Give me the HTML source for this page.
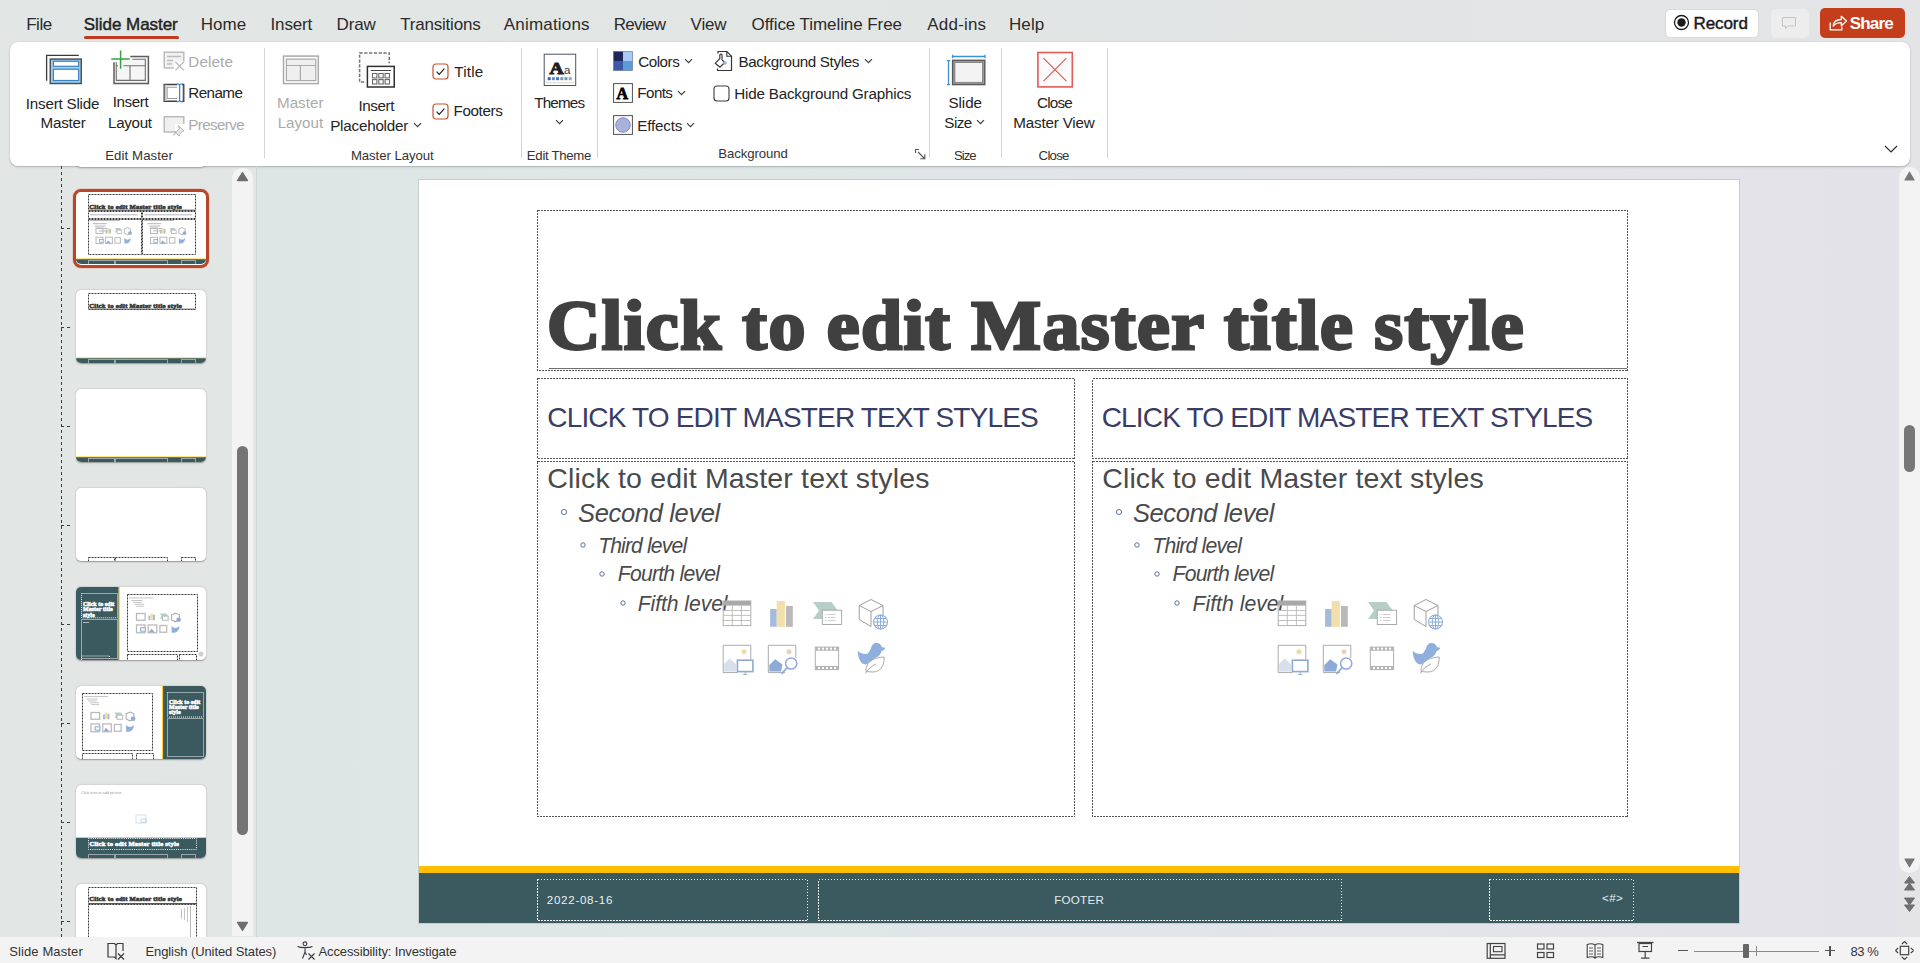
<!DOCTYPE html>
<html><head><meta charset="utf-8">
<style>
*{box-sizing:border-box}
html,body{margin:0;padding:0}
body{width:1920px;height:963px;overflow:hidden;position:relative;font-family:"Liberation Sans",sans-serif;color:#242424;background:#e3e6e5}
.a{position:absolute;white-space:nowrap}
svg{position:absolute;overflow:visible}
</style></head><body>
<div class="a" style="left:0px;top:0px;width:1920px;height:963px;background:linear-gradient(90deg,#e2e6e5 0%,#e1e5e4 50%,#e4e4e6 100%)"></div>
<div class="a" style="left:256px;top:166px;width:1643px;height:771px;background:linear-gradient(90deg,#dee6e5 0%,#dee7e6 20%,#e2e5e8 60%,#e4e2e9 100%)"></div>
<div class="a" style="left:26.18px;top:15.95px;font-family:'Liberation Sans',sans-serif;font-size:17px;line-height:17px;color:#2b2b2b;font-weight:normal;font-style:normal;letter-spacing:-0.15px;letter-spacing:-0.470px">File</div>
<div class="a" style="left:200.82px;top:15.95px;font-family:'Liberation Sans',sans-serif;font-size:17px;line-height:17px;color:#2b2b2b;font-weight:normal;font-style:normal;letter-spacing:-0.15px;letter-spacing:0.010px">Home</div>
<div class="a" style="left:270.50px;top:16.11px;font-family:'Liberation Sans',sans-serif;font-size:17px;line-height:17px;color:#2b2b2b;font-weight:normal;font-style:normal;letter-spacing:-0.15px">Insert</div>
<div class="a" style="left:336.50px;top:16.11px;font-family:'Liberation Sans',sans-serif;font-size:17px;line-height:17px;color:#2b2b2b;font-weight:normal;font-style:normal;letter-spacing:-0.15px">Draw</div>
<div class="a" style="left:400.14px;top:15.95px;font-family:'Liberation Sans',sans-serif;font-size:17px;line-height:17px;color:#2b2b2b;font-weight:normal;font-style:normal;letter-spacing:-0.15px;letter-spacing:-0.198px">Transitions</div>
<div class="a" style="left:503.82px;top:15.95px;font-family:'Liberation Sans',sans-serif;font-size:17px;line-height:17px;color:#2b2b2b;font-weight:normal;font-style:normal;letter-spacing:-0.15px;letter-spacing:0.188px">Animations</div>
<div class="a" style="left:613.66px;top:15.95px;font-family:'Liberation Sans',sans-serif;font-size:17px;line-height:17px;color:#2b2b2b;font-weight:normal;font-style:normal;letter-spacing:-0.15px;letter-spacing:-0.662px">Review</div>
<div class="a" style="left:690.50px;top:16.11px;font-family:'Liberation Sans',sans-serif;font-size:17px;line-height:17px;color:#2b2b2b;font-weight:normal;font-style:normal;letter-spacing:-0.15px">View</div>
<div class="a" style="left:751.50px;top:15.95px;font-family:'Liberation Sans',sans-serif;font-size:17px;line-height:17px;color:#2b2b2b;font-weight:normal;font-style:normal;letter-spacing:-0.15px;letter-spacing:-0.066px">Office Timeline Free</div>
<div class="a" style="left:927.30px;top:15.95px;font-family:'Liberation Sans',sans-serif;font-size:17px;line-height:17px;color:#2b2b2b;font-weight:normal;font-style:normal;letter-spacing:-0.15px;letter-spacing:0.197px">Add-ins</div>
<div class="a" style="left:1008.98px;top:15.95px;font-family:'Liberation Sans',sans-serif;font-size:17px;line-height:17px;color:#2b2b2b;font-weight:normal;font-style:normal;letter-spacing:-0.15px;letter-spacing:0.090px">Help</div>
<div class="a" style="left:83.82px;top:15.95px;font-family:'Liberation Sans',sans-serif;font-size:17px;line-height:17px;color:#242424;font-weight:normal;font-style:normal;letter-spacing:-0.5px;-webkit-text-stroke:0.45px #242424;letter-spacing:-0.049px">Slide Master</div>
<div class="a" style="left:84px;top:36px;width:95px;height:3px;border-radius:2px;background:#c23b21"></div>
<div class="a" style="left:1665px;top:9px;width:94px;height:29px;background:#fff;border:1px solid #d9d9d9;border-radius:5px"></div>
<svg style="left:1673px;top:14px" width="17" height="17" viewBox="0 0 17 17"><circle cx="8.5" cy="8.5" r="7" fill="none" stroke="#1b1b1b" stroke-width="1.3"/><circle cx="8.5" cy="8.5" r="4.2" fill="#1b1b1b"/></svg>
<div class="a" style="left:1693.52px;top:14.67px;font-family:'Liberation Sans',sans-serif;font-size:17px;line-height:17px;color:#1b1b1b;font-weight:normal;font-style:normal;letter-spacing:-0.6px;-webkit-text-stroke:0.45px #1b1b1b;letter-spacing:-0.088px">Record</div>
<div class="a" style="left:1771px;top:9px;width:38px;height:29px;background:#ededed;border-radius:5px"></div>
<svg style="left:1781px;top:16px" width="16" height="14" viewBox="0 0 16 14"><path d="M1.5 1.5h13v8.5h-7.5l-2.5 2.6v-2.6h-3z" fill="none" stroke="#c4c4c4" stroke-width="1"/></svg>
<div class="a" style="left:1820px;top:8px;width:85px;height:30px;background:#c43e1c;border-radius:5px"></div>
<svg style="left:1829px;top:14px" width="19" height="17" viewBox="0 0 19 17"><path d="M1.2 8.5v7.3h11.6v-3" fill="none" stroke="#fff" stroke-width="1.3"/><path d="M4.2 12.2c0.3-4.6 3.3-6.7 8.1-6.7v-3.2l5.2 4.7-5.2 4.7v-3.1c-3.6 0-6.3 1.1-8.1 3.6z" fill="none" stroke="#fff" stroke-width="1.3" stroke-linejoin="round"/></svg>
<div class="a" style="left:1849.84px;top:14.87px;font-family:'Liberation Sans',sans-serif;font-size:17px;line-height:17px;color:#fff;font-weight:bold;font-style:normal;letter-spacing:-0.5px;letter-spacing:-0.860px">Share</div>
<div class="a" style="left:10px;top:42px;width:1900px;height:124px;background:#fff;border-radius:8px;box-shadow:0 1px 2px rgba(0,0,0,0.22),0 0 1px rgba(0,0,0,0.2)"></div>
<div class="a" style="left:264px;top:48px;width:1px;height:110px;background:#d4d4d4"></div>
<div class="a" style="left:521px;top:48px;width:1px;height:110px;background:#d4d4d4"></div>
<div class="a" style="left:597px;top:48px;width:1px;height:110px;background:#d4d4d4"></div>
<div class="a" style="left:929px;top:48px;width:1px;height:110px;background:#d4d4d4"></div>
<div class="a" style="left:1001px;top:48px;width:1px;height:110px;background:#d4d4d4"></div>
<div class="a" style="left:1107px;top:48px;width:1px;height:110px;background:#d4d4d4"></div>
<div class="a" style="left:12.60px;width:100px;text-align:center;text-indent:-0.218px;top:95.73px;font-family:'Liberation Sans',sans-serif;font-size:15.2px;line-height:15.2px;color:#242424;font-weight:normal;font-style:normal;;letter-spacing:-0.218px">Insert Slide</div>
<div class="a" style="left:13.16px;width:100px;text-align:center;text-indent:-0.192px;top:115.41px;font-family:'Liberation Sans',sans-serif;font-size:15.2px;line-height:15.2px;color:#242424;font-weight:normal;font-style:normal;;letter-spacing:-0.192px">Master</div>
<div class="a" style="left:90.72px;width:80px;text-align:center;text-indent:-0.416px;top:94.13px;font-family:'Liberation Sans',sans-serif;font-size:15.2px;line-height:15.2px;color:#242424;font-weight:normal;font-style:normal;;letter-spacing:-0.416px">Insert</div>
<div class="a" style="left:90.00px;width:80px;text-align:center;text-indent:-0.320px;top:115.41px;font-family:'Liberation Sans',sans-serif;font-size:15.2px;line-height:15.2px;color:#242424;font-weight:normal;font-style:normal;;letter-spacing:-0.320px">Layout</div>
<div class="a" style="left:188.34px;top:54.35px;font-family:'Liberation Sans',sans-serif;font-size:15.2px;line-height:15.2px;color:#ababab;font-weight:normal;font-style:normal;;letter-spacing:0.128px">Delete</div>
<div class="a" style="left:188.34px;top:85.33px;font-family:'Liberation Sans',sans-serif;font-size:15.2px;line-height:15.2px;color:#242424;font-weight:normal;font-style:normal;;letter-spacing:-0.566px">Rename</div>
<div class="a" style="left:188.34px;top:117.39px;font-family:'Liberation Sans',sans-serif;font-size:15.2px;line-height:15.2px;color:#ababab;font-weight:normal;font-style:normal;;letter-spacing:-0.640px">Preserve</div>
<div class="a" style="left:79.02px;width:120px;text-align:center;text-indent:0.096px;top:148.57px;font-family:'Liberation Sans',sans-serif;font-size:13.2px;line-height:13.2px;color:#333;font-weight:normal;font-style:normal;;letter-spacing:0.096px">Edit Master</div>
<div class="a" style="left:260.26px;width:80px;text-align:center;text-indent:0.032px;top:95.03px;font-family:'Liberation Sans',sans-serif;font-size:15.2px;line-height:15.2px;color:#ababab;font-weight:normal;font-style:normal;;letter-spacing:0.032px">Master</div>
<div class="a" style="left:260.42px;width:80px;text-align:center;text-indent:-0.032px;top:114.73px;font-family:'Liberation Sans',sans-serif;font-size:15.2px;line-height:15.2px;color:#ababab;font-weight:normal;font-style:normal;;letter-spacing:-0.032px">Layout</div>
<div class="a" style="left:336.44px;width:80px;text-align:center;text-indent:-0.416px;top:97.61px;font-family:'Liberation Sans',sans-serif;font-size:15.2px;line-height:15.2px;color:#242424;font-weight:normal;font-style:normal;;letter-spacing:-0.416px">Insert</div>
<div class="a" style="left:330.20px;top:118.35px;font-family:'Liberation Sans',sans-serif;font-size:15.2px;line-height:15.2px;color:#242424;font-weight:normal;font-style:normal;;letter-spacing:-0.208px">Placeholder</div>
<div class="a" style="left:454.32px;top:64.23px;font-family:'Liberation Sans',sans-serif;font-size:15.2px;line-height:15.2px;color:#242424;font-weight:normal;font-style:normal;;letter-spacing:0.200px">Title</div>
<div class="a" style="left:453.52px;top:103.43px;font-family:'Liberation Sans',sans-serif;font-size:15.2px;line-height:15.2px;color:#242424;font-weight:normal;font-style:normal;;letter-spacing:-0.373px">Footers</div>
<div class="a" style="left:322.30px;width:140px;text-align:center;text-indent:-0.066px;top:148.57px;font-family:'Liberation Sans',sans-serif;font-size:13.2px;line-height:13.2px;color:#333;font-weight:normal;font-style:normal;;letter-spacing:-0.066px">Master Layout</div>
<div class="a" style="left:519.66px;width:80px;text-align:center;text-indent:-0.832px;top:94.63px;font-family:'Liberation Sans',sans-serif;font-size:15.2px;line-height:15.2px;color:#242424;font-weight:normal;font-style:normal;;letter-spacing:-0.832px">Themes</div>
<div class="a" style="left:509.10px;width:100px;text-align:center;text-indent:-0.303px;top:148.57px;font-family:'Liberation Sans',sans-serif;font-size:13.2px;line-height:13.2px;color:#333;font-weight:normal;font-style:normal;;letter-spacing:-0.303px">Edit Theme</div>
<div class="a" style="left:638.16px;top:53.83px;font-family:'Liberation Sans',sans-serif;font-size:15.2px;line-height:15.2px;color:#242424;font-weight:normal;font-style:normal;;letter-spacing:-0.448px">Colors</div>
<div class="a" style="left:637.36px;top:84.83px;font-family:'Liberation Sans',sans-serif;font-size:15.2px;line-height:15.2px;color:#242424;font-weight:normal;font-style:normal;;letter-spacing:-0.600px">Fonts</div>
<div class="a" style="left:637.36px;top:117.53px;font-family:'Liberation Sans',sans-serif;font-size:15.2px;line-height:15.2px;color:#242424;font-weight:normal;font-style:normal;;letter-spacing:-0.213px">Effects</div>
<div class="a" style="left:738.38px;top:53.83px;font-family:'Liberation Sans',sans-serif;font-size:15.2px;line-height:15.2px;color:#242424;font-weight:normal;font-style:normal;;letter-spacing:-0.350px">Background Styles</div>
<div class="a" style="left:734.20px;top:85.63px;font-family:'Liberation Sans',sans-serif;font-size:15.2px;line-height:15.2px;color:#242424;font-weight:normal;font-style:normal;letter-spacing:-0.1px;letter-spacing:-0.184px">Hide Background Graphics</div>
<div class="a" style="left:693.02px;width:120px;text-align:center;text-indent:-0.107px;top:146.73px;font-family:'Liberation Sans',sans-serif;font-size:13.2px;line-height:13.2px;color:#333;font-weight:normal;font-style:normal;;letter-spacing:-0.107px">Background</div>
<div class="a" style="left:935.26px;width:60px;text-align:center;text-indent:-0.040px;top:94.73px;font-family:'Liberation Sans',sans-serif;font-size:15.2px;line-height:15.2px;color:#242424;font-weight:normal;font-style:normal;;letter-spacing:-0.040px">Slide</div>
<div class="a" style="left:944.36px;top:114.63px;font-family:'Liberation Sans',sans-serif;font-size:15.2px;line-height:15.2px;color:#242424;font-weight:normal;font-style:normal;;letter-spacing:-0.533px">Size</div>
<div class="a" style="left:935.34px;width:60px;text-align:center;text-indent:-1.067px;top:148.57px;font-family:'Liberation Sans',sans-serif;font-size:13.2px;line-height:13.2px;color:#333;font-weight:normal;font-style:normal;;letter-spacing:-1.067px">Size</div>
<div class="a" style="left:1004.92px;width:100px;text-align:center;text-indent:-0.760px;top:94.73px;font-family:'Liberation Sans',sans-serif;font-size:15.2px;line-height:15.2px;color:#242424;font-weight:normal;font-style:normal;;letter-spacing:-0.760px">Close</div>
<div class="a" style="left:994.04px;width:120px;text-align:center;text-indent:-0.192px;top:114.63px;font-family:'Liberation Sans',sans-serif;font-size:15.2px;line-height:15.2px;color:#242424;font-weight:normal;font-style:normal;;letter-spacing:-0.192px">Master View</div>
<div class="a" style="left:1014.04px;width:80px;text-align:center;text-indent:-0.720px;top:148.57px;font-family:'Liberation Sans',sans-serif;font-size:13.2px;line-height:13.2px;color:#333;font-weight:normal;font-style:normal;;letter-spacing:-0.720px">Close</div>
<svg style="left:413.2px;top:122px" width="9" height="6" viewBox="0 0 9 6"><path d="M1 1.2L4.5 4.7L8 1.2" fill="none" stroke="#3a3a3a" stroke-width="1.15"/></svg>
<svg style="left:554.8px;top:118.5px" width="9" height="6" viewBox="0 0 9 6"><path d="M1 1.2L4.5 4.7L8 1.2" fill="none" stroke="#3a3a3a" stroke-width="1.15"/></svg>
<svg style="left:683.8px;top:57.7px" width="9" height="6" viewBox="0 0 9 6"><path d="M1 1.2L4.5 4.7L8 1.2" fill="none" stroke="#3a3a3a" stroke-width="1.15"/></svg>
<svg style="left:677.0px;top:89.7px" width="9" height="6" viewBox="0 0 9 6"><path d="M1 1.2L4.5 4.7L8 1.2" fill="none" stroke="#3a3a3a" stroke-width="1.15"/></svg>
<svg style="left:685.8px;top:121.5px" width="9" height="6" viewBox="0 0 9 6"><path d="M1 1.2L4.5 4.7L8 1.2" fill="none" stroke="#3a3a3a" stroke-width="1.15"/></svg>
<svg style="left:863.8px;top:57.7px" width="9" height="6" viewBox="0 0 9 6"><path d="M1 1.2L4.5 4.7L8 1.2" fill="none" stroke="#3a3a3a" stroke-width="1.15"/></svg>
<svg style="left:976.2px;top:118.7px" width="9" height="6" viewBox="0 0 9 6"><path d="M1 1.2L4.5 4.7L8 1.2" fill="none" stroke="#3a3a3a" stroke-width="1.15"/></svg>
<svg style="left:1883px;top:144px" width="16" height="10" viewBox="0 0 16 10"><path d="M2 2l6 6l6 -6" fill="none" stroke="#2a2a2a" stroke-width="1.15"/></svg>
<svg style="left:44px;top:53px" width="40" height="34" viewBox="0 0 40 34">
<path d="M2.6 27.7V2.4H34.75" fill="none" stroke="#3a3a3a" stroke-width="1.3"/>
<rect x="6.3" y="6.1" width="30.95" height="24.4" fill="#9dd2f6" stroke="#505050" stroke-width="1.5"/>
<rect x="9.4" y="8.3" width="25.2" height="5" fill="#fff" stroke="#3c83c4" stroke-width="1.2"/>
<rect x="9.4" y="16.25" width="25.2" height="11.25" fill="#fff" stroke="#3c83c4" stroke-width="1.2"/>
</svg>
<svg style="left:108px;top:48px" width="42" height="38" viewBox="0 0 42 38">
<path d="M22.3 8.5H40.4V35.5H6V14.25" fill="#f6f6f6" stroke="#5e5e5e" stroke-width="1.5"/>
<path d="M24.5 11.25H37.3V32.4H8.25V14.25" fill="none" stroke="#707070" stroke-width="1.1"/>
<path d="M15.4 17.7H37.3M22 17.7V32.4M8.25 17.7H10" fill="none" stroke="#707070" stroke-width="1.1"/>
<path d="M12.6 2.4V20.8M3.25 11.1H21.7" fill="none" stroke="#3aa047" stroke-width="1.5"/>
</svg>
<svg style="left:163px;top:51px" width="24" height="22" viewBox="0 0 24 22">
<rect x="1.2" y="1.2" width="19.6" height="15.8" fill="#f2f2f2" stroke="#b8b8b8" stroke-width="1.4"/>
<path d="M4 5.5H18M4 9.5H10M4 13H9" stroke="#bdbdbd" stroke-width="1.3"/>
<path d="M11 10.5h11v10h-11z" fill="#fff"/>
<path d="M12.4 11L20.8 19.4M20.8 11L12.4 19.4" stroke="#b8b8b8" stroke-width="1.2"/>
</svg>
<svg style="left:163px;top:83px" width="24" height="22" viewBox="0 0 24 22">
<path d="M14 1.5H1.3V18.3H14" fill="none" stroke="#3f3f3f" stroke-width="1.6"/>
<path d="M14 4.3H4.1V15.5H14" fill="#fff" stroke="#9a9a9a" stroke-width="1.1"/>
<rect x="1.6" y="1.8" width="2.2" height="16.2" fill="#c8c8c8"/>
<path d="M19.2 1.5H20.8V18.3H19.2" fill="#bdbdbd" stroke="#3f3f3f" stroke-width="1.3"/>
<path d="M16.6 2.6V17.2" stroke="#2e86d4" stroke-width="1.2"/>
<path d="M13.6 0.9C15.6 0.9 16.6 1.3 16.6 2.8C16.6 1.3 17.6 0.9 19.6 0.9M13.6 18.9C15.6 18.9 16.6 18.5 16.6 17C16.6 18.5 17.6 18.9 19.6 18.9" fill="none" stroke="#2e86d4" stroke-width="1.1"/>
</svg>
<svg style="left:163px;top:115px" width="24" height="22" viewBox="0 0 24 22">
<rect x="1.2" y="1.7" width="19.6" height="15.3" fill="#f0f0f0" stroke="#b8b8b8" stroke-width="1.4"/>
<path d="M12 9h10v12h-10z" fill="#fff"/>
<path d="M15.5 10.5l5.5 5.5l-1.7 0.6l-2.8 2.8l-0.2 1.7l-4.4-4.4l1.7-0.2l2.8-2.8z" fill="#e6e6e6" stroke="#b5b5b5" stroke-width="1"/>
<path d="M13.6 16.6L10.3 20.3" stroke="#b5b5b5" stroke-width="1.1"/>
</svg>
<svg style="left:281px;top:54px" width="40" height="32" viewBox="0 0 40 32">
<rect x="2.5" y="2.1" width="34.8" height="27.5" fill="#fff" stroke="#aaaaaa" stroke-width="1.5"/>
<rect x="5.4" y="5.1" width="29.4" height="21.5" fill="#efefef" stroke="#a9a9a9" stroke-width="1.2"/>
<path d="M5.4 11.5H34.8M19.4 11.5V26.6" stroke="#a9a9a9" stroke-width="1.2"/>
</svg>
<svg style="left:357px;top:51px" width="40" height="38" viewBox="0 0 40 38">
<path d="M7.25 31H2.6V1.9H32.25V12.3" fill="#fafafa" stroke="#747474" stroke-width="1.5" stroke-dasharray="3.2 1.6"/>
<rect x="10.4" y="15.4" width="26.85" height="20.6" fill="#fff" stroke="#2f2f2f" stroke-width="1.5"/>
<path d="M13.9 19.5H34" stroke="#444" stroke-width="1"/>
<g fill="#fff" stroke="#6a6a6a" stroke-width="1.1">
<rect x="15.5" y="22.5" width="4.4" height="4.4"/><rect x="21.8" y="22.5" width="4.4" height="4.4"/><rect x="28.1" y="22.5" width="4.4" height="4.4"/>
<rect x="15.5" y="28.6" width="4.4" height="4.4"/><rect x="21.8" y="28.6" width="4.4" height="4.4"/><rect x="28.1" y="28.6" width="4.4" height="4.4"/>
</g>
</svg>
<svg style="left:543px;top:53px" width="34" height="34" viewBox="0 0 34 34">
<rect x="1.2" y="1.2" width="31.5" height="31.3" fill="#fff" stroke="#4d5262" stroke-width="1"/>
<text x="6.6" y="21.3" font-family="Liberation Serif" font-weight="bold" font-size="17.5" fill="#1e1e1e" stroke="#1e1e1e" stroke-width="1.1" transform="translate(6.6 21.3) scale(1.12 1) translate(-6.6 -21.3)">A</text>
<text x="21" y="21.2" font-family="Liberation Sans" font-size="11.5" fill="#333">a</text>
<rect x="4.7" y="24.2" width="3" height="3" fill="#3f60a6"/><rect x="8.9" y="24.2" width="3" height="3" fill="#5b8ccf"/>
<rect x="13.1" y="24.2" width="3" height="3" fill="#3d70c2"/><rect x="17.3" y="24.2" width="3" height="3" fill="#7792b9"/>
<rect x="21.5" y="24.2" width="3" height="3" fill="#6b98b0"/><rect x="25.7" y="24.2" width="3" height="3" fill="#98a6bb"/>
<path d="M2.5 29.8H31.5" stroke="#d9d5c3" stroke-width="1"/>
</svg>
<svg style="left:613px;top:51px" width="20" height="20" viewBox="0 0 20 20">
<rect x="0.5" y="0.5" width="9.5" height="9.5" fill="#1e2659"/><rect x="10" y="0.5" width="9.5" height="9.5" fill="#a8caf3"/>
<rect x="0.5" y="10" width="9.5" height="9.5" fill="#3e58a8"/><rect x="10" y="10" width="9.5" height="9.5" fill="#5b9bd6"/>
<rect x="0.5" y="0.5" width="19" height="19" fill="none" stroke="#5a6a8c" stroke-width="0.6"/>
</svg>
<svg style="left:613px;top:83px" width="20" height="20" viewBox="0 0 20 20">
<rect x="0.6" y="0.6" width="18.8" height="18.8" fill="#fff" stroke="#505050" stroke-width="1"/>
<text x="3.4" y="16.4" font-family="Liberation Serif" font-weight="bold" font-size="16" fill="#000" stroke="#000" stroke-width="0.8">A</text>
</svg>
<svg style="left:613px;top:115px" width="20" height="20" viewBox="0 0 20 20">
<rect x="0.6" y="0.6" width="18.8" height="18.8" fill="#fff" stroke="#505050" stroke-width="1"/>
<circle cx="10" cy="10" r="7.3" fill="#a8b2dc" stroke="#7a84b6" stroke-width="0.9"/>
</svg>
<svg style="left:713px;top:50px" width="22" height="22" viewBox="0 0 22 22">
<path d="M5 3.5V1.5H13.8L18.5 6.2V20.5H4.5V18.5" fill="none" stroke="#333" stroke-width="1.2"/>
<path d="M13.8 1.5V6.2H18.5" fill="none" stroke="#333" stroke-width="1.1"/>
<path d="M2.2 13.3L6.8 8.7V5.2c0-1.5 2.2-1.5 2.2 0V9.8l2.7 2.7L7 17.2z" fill="#fff" stroke="#333" stroke-width="1.15" stroke-linejoin="round"/>
<circle cx="12" cy="13" r="1.8" fill="#8dbbe8"/>
</svg>
<svg style="left:431.5px;top:62.5px" width="17" height="17" viewBox="0 0 17 17"><rect x="1" y="1" width="15" height="15" rx="3" fill="#fff" stroke="#c4532e" stroke-width="1.2"/><path d="M4.6 8.7l2.6 2.6l5.2-5.6" fill="none" stroke="#222" stroke-width="1.2"/></svg>
<svg style="left:431.5px;top:102.7px" width="17" height="17" viewBox="0 0 17 17"><rect x="1" y="1" width="15" height="15" rx="3" fill="#fff" stroke="#c4532e" stroke-width="1.2"/><path d="M4.6 8.7l2.6 2.6l5.2-5.6" fill="none" stroke="#222" stroke-width="1.2"/></svg>
<svg style="left:712.5px;top:84.5px" width="17" height="17" viewBox="0 0 17 17"><rect x="1" y="1" width="15" height="15" rx="3" fill="#fff" stroke="#3c3c3c" stroke-width="1.1"/></svg>
<svg style="left:945px;top:53px" width="44" height="36" viewBox="0 0 44 36">
<path d="M7.6 3.5H40M7.6 1.8V5.2M40 1.8V5.2" stroke="#3b92d4" stroke-width="1.3"/>
<path d="M3.5 7.6V31.6M1.8 7.6H5.2M1.8 31.6H5.2" stroke="#3b92d4" stroke-width="1.3"/>
<rect x="7.6" y="7.3" width="32.2" height="24.3" fill="#9a9a9a" stroke="#5a5a5a" stroke-width="1.4"/>
<rect x="9.9" y="9.6" width="27.6" height="19.7" fill="#f3f3f3" stroke="#7c7c7c" stroke-width="0.8"/>
</svg>
<svg style="left:1035px;top:50px" width="40" height="40" viewBox="0 0 40 40">
<rect x="2.9" y="2.5" width="34.4" height="34.4" fill="#fbfbfb" stroke="#e25a5a" stroke-width="1.6"/>
<path d="M8.5 8.2L31.4 31.2M31.4 8.2L8.5 31.2" stroke="#e25a5a" stroke-width="1.2"/>
</svg>
<svg style="left:914px;top:148px" width="13" height="13" viewBox="0 0 13 13"><path d="M1.5 5V1.5H5M4 4L10.5 10.5M10.8 6.2V10.8H6.2" fill="none" stroke="#555" stroke-width="1.1"/></svg>
<div class="a" style="left:1899px;top:167px;width:21px;height:706px;background:#f3f3f3;border-radius:10px"></div>
<svg style="left:1904px;top:171px" width="11" height="10" viewBox="0 0 11 10"><path d="M5.5 1.2L10 9H1z" fill="#777" stroke="#777" stroke-width="1.2" stroke-linejoin="round"/></svg>
<div class="a" style="left:1904px;top:425px;width:11px;height:47px;background:#777;border-radius:5.5px"></div>
<svg style="left:1904px;top:858px" width="11" height="10" viewBox="0 0 11 10"><path d="M5.5 8.8L10 1H1z" fill="#777" stroke="#777" stroke-width="1.2" stroke-linejoin="round"/></svg>
<svg style="left:1903px;top:875px" width="13" height="17" viewBox="0 0 13 17"><path d="M6.5 1.5L11.5 8H1.5z M6.5 8L11.5 15H1.5z" fill="#6f6f6f" stroke="#6f6f6f" stroke-width="1" stroke-linejoin="round"/></svg>
<svg style="left:1903px;top:896px" width="13" height="17" viewBox="0 0 13 17"><path d="M6.5 15.5L11.5 9H1.5z M6.5 9L11.5 2H1.5z" fill="#6f6f6f" stroke="#6f6f6f" stroke-width="1" stroke-linejoin="round"/></svg>
<div class="a" style="left:418px;top:179px;width:1322px;height:745px;background:#fff;border:1px solid #c9cccc"></div>
<div class="a" style="left:419px;top:866px;width:1320px;height:7px;background:#fdbf00"></div>
<div class="a" style="left:419px;top:873px;width:1320px;height:50px;background:#3b5a60"></div>
<svg style="left:0;top:0" width="1920" height="963" shape-rendering="crispEdges"><rect x="537.5" y="210.5" width="1090" height="160" fill="none" stroke="#555" stroke-width="1" stroke-dasharray="2 1"/><path d="M548.5 368.5H1627" stroke="#6f6f6f" stroke-width="1"/><rect x="537.5" y="378.5" width="537" height="80" fill="none" stroke="#555" stroke-width="1" stroke-dasharray="2 1"/><rect x="1092.5" y="378.5" width="535" height="80" fill="none" stroke="#555" stroke-width="1" stroke-dasharray="2 1"/><rect x="537.5" y="461.5" width="537" height="355" fill="none" stroke="#555" stroke-width="1" stroke-dasharray="2 1"/><rect x="1092.5" y="461.5" width="535" height="355" fill="none" stroke="#555" stroke-width="1" stroke-dasharray="2 1"/><rect x="537.5" y="879.5" width="270" height="41" fill="none" stroke="#f2f6f7" stroke-width="1" stroke-dasharray="1.5 1.5"/><rect x="818.5" y="879.5" width="523" height="41" fill="none" stroke="#f2f6f7" stroke-width="1" stroke-dasharray="1.5 1.5"/><rect x="1489.5" y="879.5" width="144" height="41" fill="none" stroke="#f2f6f7" stroke-width="1" stroke-dasharray="1.5 1.5"/></svg>
<div class="a" style="left:546.60px;top:292.01px;font-family:'Liberation Serif',serif;font-size:69px;line-height:69px;color:#404040;font-weight:bold;font-style:normal;-webkit-text-stroke:2.8px #404040;transform:scaleX(1.07);transform-origin:0 0;letter-spacing:1.358px">Click to edit Master title style</div>
<div class="a" style="left:547.28px;top:404.20px;font-family:'Liberation Sans',sans-serif;font-size:28px;line-height:28px;color:#393c64;font-weight:normal;font-style:normal;;letter-spacing:-0.830px">CLICK TO EDIT MASTER TEXT STYLES</div>
<div class="a" style="left:547.28px;top:464.35px;font-family:'Liberation Sans',sans-serif;font-size:28.5px;line-height:28.5px;color:#4a4a4a;font-weight:normal;font-style:normal;;letter-spacing:0.172px">Click to edit Master text styles</div>
<div class="a" style="left:578.12px;top:501.03px;font-family:'Liberation Sans',sans-serif;font-size:25.5px;line-height:25.5px;color:#4a4a4a;font-weight:normal;font-style:italic;;letter-spacing:-0.350px">Second level</div>
<div class="a" style="left:598.16px;top:535.01px;font-family:'Liberation Sans',sans-serif;font-size:21.2px;line-height:21.2px;color:#4a4a4a;font-weight:normal;font-style:italic;;letter-spacing:-0.880px">Third level</div>
<div class="a" style="left:617.72px;top:563.33px;font-family:'Liberation Sans',sans-serif;font-size:21.2px;line-height:21.2px;color:#4a4a4a;font-weight:normal;font-style:italic;;letter-spacing:-0.764px">Fourth level</div>
<div class="a" style="left:637.64px;top:593.01px;font-family:'Liberation Sans',sans-serif;font-size:21.2px;line-height:21.2px;color:#4a4a4a;font-weight:normal;font-style:italic;;letter-spacing:-0.072px">Fifth level</div>
<svg style="left:560px;top:508.4px" width="8" height="8" viewBox="0 0 8 8"><circle cx="4" cy="4" r="2.6" fill="none" stroke="#5a72a0" stroke-width="1"/></svg>
<svg style="left:578.5px;top:540.7px" width="8" height="8" viewBox="0 0 8 8"><circle cx="4" cy="4" r="2.2" fill="none" stroke="#5a72a0" stroke-width="1"/></svg>
<svg style="left:598.2px;top:569.6px" width="8" height="8" viewBox="0 0 8 8"><circle cx="4" cy="4" r="2.2" fill="none" stroke="#5a72a0" stroke-width="1"/></svg>
<svg style="left:618.8px;top:598.8px" width="8" height="8" viewBox="0 0 8 8"><circle cx="4" cy="4" r="2.2" fill="none" stroke="#5a72a0" stroke-width="1"/></svg>
<svg style="left:722px;top:600px" width="30" height="27" viewBox="0 0 30 27"><rect x="1.2" y="1" width="27.6" height="24.6" fill="none" stroke="#aeaeae" stroke-width="1"/>
<rect x="1.2" y="1" width="27.6" height="4.6" fill="#a9a9a9"/>
<path d="M10.3 5.6V25.6M19.4 5.6V25.6M1.2 10.5H28.8M1.2 15.4H28.8M1.2 20.5H28.8" stroke="#b9b9b9" stroke-width="0.9"/></svg>
<svg style="left:769px;top:600px" width="26" height="28" viewBox="0 0 26 28"><rect x="1.1" y="9" width="6.6" height="17.8" fill="#a3bcdb"/>
<rect x="7.7" y="1" width="8.2" height="25.8" fill="#f2dfab"/>
<rect x="17" y="6" width="6.8" height="20.8" fill="#b9b9b9"/></svg>
<svg style="left:812px;top:601px" width="31" height="25" viewBox="0 0 31 25"><path d="M1 1.1H19.5L25.7 9.5L19.5 17.9H1L7 9.5z" fill="#b6cec7"/>
<rect x="10.3" y="9.2" width="19.3" height="14.3" fill="#fff" stroke="#ababab" stroke-width="1"/>
<path d="M13 13.5H14.5M16 13.5H23.5M13 16.5H14.5M16 16.5H23.5M13 19.5H14.5M16 19.5H23.5" stroke="#c2c2c2" stroke-width="0.8"/></svg>
<svg style="left:858px;top:598px" width="32" height="32" viewBox="0 0 32 32"><path d="M13 1.5L25 7.5V20M13 1.5L1.2 7.5V21.5L13 28.5M1.2 7.5L13 13.5V28.5M13 13.5L25 7.5" fill="none" stroke="#9e9e9e" stroke-width="1"/>
<circle cx="22.5" cy="24" r="7" fill="#fff" stroke="#8daedb" stroke-width="1.1"/>
<path d="M15.5 24H29.5M22.5 17V31M17 20.5H28M17 27.5H28" stroke="#8daedb" stroke-width="1"/>
<ellipse cx="22.5" cy="24" rx="3.2" ry="7" fill="none" stroke="#8daedb" stroke-width="1"/></svg>
<svg style="left:722px;top:644px" width="33" height="32" viewBox="0 0 33 32"><path d="M15.5 28.6H1.2V1.3H28.8V15.2" fill="none" stroke="#ababab" stroke-width="1"/>
<circle cx="22" cy="7.8" r="2.5" fill="#eddca0"/>
<path d="M2.2 27.6V20L7.5 14.6L14 20V27.6z" fill="#d6dfea"/>
<rect x="15.4" y="16.2" width="15.5" height="11.4" fill="#fff" stroke="#8ea9d0" stroke-width="1.6"/>
<path d="M21 30.5H25.5M23.2 28V30.5" stroke="#9ab" stroke-width="0.9"/></svg>
<svg style="left:767px;top:644px" width="33" height="34" viewBox="0 0 33 34"><path d="M1.3 28.6V1.3H28.8V14" fill="none" stroke="#ababab" stroke-width="1"/>
<path d="M1.3 28.6H18" fill="none" stroke="#ababab" stroke-width="1"/>
<circle cx="22" cy="7.8" r="2.5" fill="#ead2b4"/>
<path d="M2.3 27.6V21L8.2 15.3L15.5 20.5L14 27.6z" fill="#8eaad6"/>
<circle cx="24.2" cy="19.5" r="5.6" fill="#fff" stroke="#8eaad6" stroke-width="1.5"/>
<path d="M20.2 23.6L14.5 29.8" stroke="#8eaad6" stroke-width="1.7"/></svg>
<svg style="left:814px;top:646px" width="26" height="25" viewBox="0 0 26 25"><rect x="1.3" y="1.1" width="23.3" height="22.5" fill="#fff" stroke="#b0b0b0" stroke-width="1"/>
<path d="M1.3 4.2H24.6M1.3 20.5H24.6" stroke="#b0b0b0" stroke-width="1"/>
<path d="M3 1.1V4.2M7 1.1V4.2M11 1.1V4.2M15 1.1V4.2M19 1.1V4.2M23 1.1V4.2M3 20.5V23.6M7 20.5V23.6M11 20.5V23.6M15 20.5V23.6M19 20.5V23.6M23 20.5V23.6" stroke="#b0b0b0" stroke-width="1.8"/></svg>
<svg style="left:856px;top:642px" width="31" height="33" viewBox="0 0 31 33"><path d="M1.7 8.7C5 12 9 12.5 12 11.5C13 10 14 8 15 6.8C15.5 3 18 1 20.5 1C23.5 1 25.5 3 26 5.3L29.5 5.8C29 7 27.5 8.5 25.5 9.2C25 12 22.5 15 19 16C15 19 12 21.5 10 22.5C6 22.5 2 18 1.7 8.7z" fill="#8fb0dc"/>
<path d="M10 29.5C10 22 14 16 28.2 15C28.5 24 24 30 17 30C14 30 11.5 29.5 10 29.5z" fill="#fff" stroke="#a9a9a9" stroke-width="1"/>
<path d="M9.5 31.5C12 27 15.5 24 20 22" fill="none" stroke="#a9a9a9" stroke-width="1"/></svg>
<div class="a" style="left:1101.70px;top:404.20px;font-family:'Liberation Sans',sans-serif;font-size:28px;line-height:28px;color:#393c64;font-weight:normal;font-style:normal;;letter-spacing:-0.824px">CLICK TO EDIT MASTER TEXT STYLES</div>
<div class="a" style="left:1102.18px;top:464.35px;font-family:'Liberation Sans',sans-serif;font-size:28.5px;line-height:28.5px;color:#4a4a4a;font-weight:normal;font-style:normal;;letter-spacing:0.146px">Click to edit Master text styles</div>
<div class="a" style="left:1133.02px;top:501.03px;font-family:'Liberation Sans',sans-serif;font-size:25.5px;line-height:25.5px;color:#4a4a4a;font-weight:normal;font-style:italic;;letter-spacing:-0.423px">Second level</div>
<div class="a" style="left:1152.26px;top:535.01px;font-family:'Liberation Sans',sans-serif;font-size:21.2px;line-height:21.2px;color:#4a4a4a;font-weight:normal;font-style:italic;;letter-spacing:-0.800px">Third level</div>
<div class="a" style="left:1172.62px;top:563.33px;font-family:'Liberation Sans',sans-serif;font-size:21.2px;line-height:21.2px;color:#4a4a4a;font-weight:normal;font-style:italic;;letter-spacing:-0.836px">Fourth level</div>
<div class="a" style="left:1192.54px;top:593.01px;font-family:'Liberation Sans',sans-serif;font-size:21.2px;line-height:21.2px;color:#4a4a4a;font-weight:normal;font-style:italic;;letter-spacing:0.008px">Fifth level</div>
<svg style="left:1114.5px;top:508.4px" width="8" height="8" viewBox="0 0 8 8"><circle cx="4" cy="4" r="2.6" fill="none" stroke="#5a72a0" stroke-width="1"/></svg>
<svg style="left:1133.0px;top:540.7px" width="8" height="8" viewBox="0 0 8 8"><circle cx="4" cy="4" r="2.2" fill="none" stroke="#5a72a0" stroke-width="1"/></svg>
<svg style="left:1152.7px;top:569.6px" width="8" height="8" viewBox="0 0 8 8"><circle cx="4" cy="4" r="2.2" fill="none" stroke="#5a72a0" stroke-width="1"/></svg>
<svg style="left:1173.3px;top:598.8px" width="8" height="8" viewBox="0 0 8 8"><circle cx="4" cy="4" r="2.2" fill="none" stroke="#5a72a0" stroke-width="1"/></svg>
<svg style="left:1276.5px;top:600px" width="30" height="27" viewBox="0 0 30 27"><rect x="1.2" y="1" width="27.6" height="24.6" fill="none" stroke="#aeaeae" stroke-width="1"/>
<rect x="1.2" y="1" width="27.6" height="4.6" fill="#a9a9a9"/>
<path d="M10.3 5.6V25.6M19.4 5.6V25.6M1.2 10.5H28.8M1.2 15.4H28.8M1.2 20.5H28.8" stroke="#b9b9b9" stroke-width="0.9"/></svg>
<svg style="left:1323.5px;top:600px" width="26" height="28" viewBox="0 0 26 28"><rect x="1.1" y="9" width="6.6" height="17.8" fill="#a3bcdb"/>
<rect x="7.7" y="1" width="8.2" height="25.8" fill="#f2dfab"/>
<rect x="17" y="6" width="6.8" height="20.8" fill="#b9b9b9"/></svg>
<svg style="left:1366.5px;top:601px" width="31" height="25" viewBox="0 0 31 25"><path d="M1 1.1H19.5L25.7 9.5L19.5 17.9H1L7 9.5z" fill="#b6cec7"/>
<rect x="10.3" y="9.2" width="19.3" height="14.3" fill="#fff" stroke="#ababab" stroke-width="1"/>
<path d="M13 13.5H14.5M16 13.5H23.5M13 16.5H14.5M16 16.5H23.5M13 19.5H14.5M16 19.5H23.5" stroke="#c2c2c2" stroke-width="0.8"/></svg>
<svg style="left:1412.5px;top:598px" width="32" height="32" viewBox="0 0 32 32"><path d="M13 1.5L25 7.5V20M13 1.5L1.2 7.5V21.5L13 28.5M1.2 7.5L13 13.5V28.5M13 13.5L25 7.5" fill="none" stroke="#9e9e9e" stroke-width="1"/>
<circle cx="22.5" cy="24" r="7" fill="#fff" stroke="#8daedb" stroke-width="1.1"/>
<path d="M15.5 24H29.5M22.5 17V31M17 20.5H28M17 27.5H28" stroke="#8daedb" stroke-width="1"/>
<ellipse cx="22.5" cy="24" rx="3.2" ry="7" fill="none" stroke="#8daedb" stroke-width="1"/></svg>
<svg style="left:1276.5px;top:644px" width="33" height="32" viewBox="0 0 33 32"><path d="M15.5 28.6H1.2V1.3H28.8V15.2" fill="none" stroke="#ababab" stroke-width="1"/>
<circle cx="22" cy="7.8" r="2.5" fill="#eddca0"/>
<path d="M2.2 27.6V20L7.5 14.6L14 20V27.6z" fill="#d6dfea"/>
<rect x="15.4" y="16.2" width="15.5" height="11.4" fill="#fff" stroke="#8ea9d0" stroke-width="1.6"/>
<path d="M21 30.5H25.5M23.2 28V30.5" stroke="#9ab" stroke-width="0.9"/></svg>
<svg style="left:1321.5px;top:644px" width="33" height="34" viewBox="0 0 33 34"><path d="M1.3 28.6V1.3H28.8V14" fill="none" stroke="#ababab" stroke-width="1"/>
<path d="M1.3 28.6H18" fill="none" stroke="#ababab" stroke-width="1"/>
<circle cx="22" cy="7.8" r="2.5" fill="#ead2b4"/>
<path d="M2.3 27.6V21L8.2 15.3L15.5 20.5L14 27.6z" fill="#8eaad6"/>
<circle cx="24.2" cy="19.5" r="5.6" fill="#fff" stroke="#8eaad6" stroke-width="1.5"/>
<path d="M20.2 23.6L14.5 29.8" stroke="#8eaad6" stroke-width="1.7"/></svg>
<svg style="left:1368.5px;top:646px" width="26" height="25" viewBox="0 0 26 25"><rect x="1.3" y="1.1" width="23.3" height="22.5" fill="#fff" stroke="#b0b0b0" stroke-width="1"/>
<path d="M1.3 4.2H24.6M1.3 20.5H24.6" stroke="#b0b0b0" stroke-width="1"/>
<path d="M3 1.1V4.2M7 1.1V4.2M11 1.1V4.2M15 1.1V4.2M19 1.1V4.2M23 1.1V4.2M3 20.5V23.6M7 20.5V23.6M11 20.5V23.6M15 20.5V23.6M19 20.5V23.6M23 20.5V23.6" stroke="#b0b0b0" stroke-width="1.8"/></svg>
<svg style="left:1410.5px;top:642px" width="31" height="33" viewBox="0 0 31 33"><path d="M1.7 8.7C5 12 9 12.5 12 11.5C13 10 14 8 15 6.8C15.5 3 18 1 20.5 1C23.5 1 25.5 3 26 5.3L29.5 5.8C29 7 27.5 8.5 25.5 9.2C25 12 22.5 15 19 16C15 19 12 21.5 10 22.5C6 22.5 2 18 1.7 8.7z" fill="#8fb0dc"/>
<path d="M10 29.5C10 22 14 16 28.2 15C28.5 24 24 30 17 30C14 30 11.5 29.5 10 29.5z" fill="#fff" stroke="#a9a9a9" stroke-width="1"/>
<path d="M9.5 31.5C12 27 15.5 24 20 22" fill="none" stroke="#a9a9a9" stroke-width="1"/></svg>
<div class="a" style="left:546.76px;top:894.28px;font-family:'Liberation Sans',sans-serif;font-size:11.6px;line-height:11.6px;color:#e9f1f3;font-weight:normal;font-style:normal;;letter-spacing:0.711px">2022-08-16</div>
<div class="a" style="left:979.00px;width:200px;text-align:center;text-indent:0.272px;top:893.64px;font-family:'Liberation Sans',sans-serif;font-size:11.6px;line-height:11.6px;color:#e1eef1;font-weight:normal;font-style:normal;;letter-spacing:0.272px">FOOTER</div>
<div class="a" style="left:1563.24px;width:60px;text-align:right;top:891.88px;font-family:'Liberation Sans',sans-serif;font-size:11.6px;line-height:11.6px;color:#e9f1f3;font-weight:normal;font-style:normal;;letter-spacing:0.440px">&lt;#&gt;</div>
<div class="a" style="left:232px;top:168px;width:21px;height:768px;background:#f3f3f3;border-radius:10px 10px 0 0"></div>
<div class="a" style="left:256px;top:166px;width:1px;height:771px;background:#d3d6d6"></div>
<svg style="left:236px;top:171px" width="13" height="11" viewBox="0 0 13 11"><path d="M6.5 1.5L11.5 9.5H1.5z" fill="#6e6e6e" stroke="#6e6e6e" stroke-width="1.3" stroke-linejoin="round"/></svg>
<div class="a" style="left:237px;top:446px;width:11px;height:389px;background:#757575;border-radius:5.5px"></div>
<svg style="left:236px;top:921px" width="13" height="11" viewBox="0 0 13 11"><path d="M6.5 9.5L11.5 1.5H1.5z" fill="#6e6e6e" stroke="#6e6e6e" stroke-width="1.3" stroke-linejoin="round"/></svg>
<div class="a" style="left:60px;top:166px;width:160px;height:10px;overflow:hidden"><div class="a" style="left:16px;top:-10px;width:130px;height:11px;background:#fff;border-radius:5px;box-shadow:0 0.5px 2.5px rgba(0,0,0,0.4)"></div></div>
<svg style="left:0;top:0" width="300" height="963" shape-rendering="crispEdges"><path d="M61.5 166V937" stroke="#3c3c3c" stroke-width="1" stroke-dasharray="3 3"/><path d="M61 228.5H71" stroke="#3c3c3c" stroke-width="1" stroke-dasharray="3 3"/><path d="M61 327.5H71" stroke="#3c3c3c" stroke-width="1" stroke-dasharray="3 3"/><path d="M61 426.5H71" stroke="#3c3c3c" stroke-width="1" stroke-dasharray="3 3"/><path d="M61 525.5H71" stroke="#3c3c3c" stroke-width="1" stroke-dasharray="3 3"/><path d="M61 624.5H71" stroke="#3c3c3c" stroke-width="1" stroke-dasharray="3 3"/><path d="M61 723.5H71" stroke="#3c3c3c" stroke-width="1" stroke-dasharray="3 3"/><path d="M61 822.5H71" stroke="#3c3c3c" stroke-width="1" stroke-dasharray="3 3"/><path d="M61 921.5H71" stroke="#3c3c3c" stroke-width="1" stroke-dasharray="3 3"/></svg>
<div class="a" style="left:73px;top:189px;width:136px;height:79px;border:3px solid #b8472a;border-radius:8px;background:#fff;box-shadow:0 0 0 1px rgba(230,160,140,0.35)"></div>
<div class="a" style="left:76px;top:191px;width:130px;height:73px;border-radius:5px;overflow:hidden">
<svg style="left:0;top:0" width="130" height="73"><rect x="12.5" y="3.5" width="107" height="16" fill="none" stroke="#3a3a3a" stroke-width="1" stroke-dasharray="2 1"/><path d="M12.783661119515886 19.085476550680788H118.88804841149773" stroke="#555" stroke-width="0.8"/><rect x="12.5" y="20.5" width="53" height="7" fill="none" stroke="#3a3a3a" stroke-width="1" stroke-dasharray="2 1"/><rect x="66.5" y="20.5" width="53" height="7" fill="none" stroke="#3a3a3a" stroke-width="1" stroke-dasharray="2 1"/><rect x="12.5" y="28.5" width="53" height="35" fill="none" stroke="#3a3a3a" stroke-width="1" stroke-dasharray="2 1"/><rect x="66.5" y="28.5" width="53" height="35" fill="none" stroke="#3a3a3a" stroke-width="1" stroke-dasharray="2 1"/><text x="13.3" y="17.6" font-family="Liberation Serif" font-weight="bold" font-size="6.6" fill="#404040" stroke="#404040" stroke-width="0.7" letter-spacing="0.3">Click to edit Master title style</text><rect x="13.7" y="23.3" width="48" height="1" fill="#b5b7c4"/><rect x="13.7" y="29.0" width="30.0" height="1.0" fill="#9a9a9a" opacity="0.7"/><rect x="16.7" y="32.2" width="14.0" height="1.0" fill="#9a9a9a" opacity="0.7"/><rect x="18.7" y="34.6" width="11.0" height="1.0" fill="#9a9a9a" opacity="0.7"/><rect x="20.7" y="37.0" width="12.0" height="1.0" fill="#9a9a9a" opacity="0.7"/><rect x="22.7" y="39.4" width="10.0" height="1.0" fill="#9a9a9a" opacity="0.7"/><g transform="translate(20,37) scale(2.1)"><rect x="0" y="0" width="3.3" height="2.6" fill="none" stroke="#b9b9b9" stroke-width="0.5"/><rect x="4.6" y="0.8" width="0.8" height="1.8" fill="#a3bcdb"/><rect x="5.4" y="0" width="0.9" height="2.6" fill="#f2dfab"/><rect x="6.3" y="0.5" width="0.8" height="2.1" fill="#b9b9b9"/><path d="M9 0h2.5l0.6 1l-0.6 1h-2.5l0.6-1z" fill="#b6cec7"/><rect x="10" y="1" width="2.2" height="1.6" fill="#fff" stroke="#bbb" stroke-width="0.4"/><path d="M13.5 0.5l1.5-0.7l1.5 0.7v2l-1.5 0.7l-1.5-0.7z" fill="none" stroke="#aaa" stroke-width="0.4"/><circle cx="16.2" cy="2.4" r="0.9" fill="#8daedb"/><rect x="0" y="4.4" width="3.3" height="3" fill="none" stroke="#bbb" stroke-width="0.5"/><rect x="1.6" y="5.5" width="1.8" height="1.3" fill="#fff" stroke="#8ea9d0" stroke-width="0.4"/><rect x="4.5" y="4.4" width="3.3" height="3" fill="none" stroke="#bbb" stroke-width="0.5"/><path d="M4.8 7.2l1-1.3l1.2 1.3z" fill="#8eaad6"/><rect x="9" y="4.6" width="2.6" height="2.6" fill="none" stroke="#bbb" stroke-width="0.5"/><path d="M13.5 4.8c1 1 2 1 3 0c0 2-1.5 3-3 2.5z" fill="#8fb0dc"/></g><rect x="68.2" y="23.3" width="48" height="1" fill="#b5b7c4"/><rect x="68.2" y="29.0" width="30.0" height="1.0" fill="#9a9a9a" opacity="0.7"/><rect x="71.2" y="32.2" width="14.0" height="1.0" fill="#9a9a9a" opacity="0.7"/><rect x="73.2" y="34.6" width="11.0" height="1.0" fill="#9a9a9a" opacity="0.7"/><rect x="75.2" y="37.0" width="12.0" height="1.0" fill="#9a9a9a" opacity="0.7"/><rect x="77.2" y="39.4" width="10.0" height="1.0" fill="#9a9a9a" opacity="0.7"/><g transform="translate(74.5,37) scale(2.1)"><rect x="0" y="0" width="3.3" height="2.6" fill="none" stroke="#b9b9b9" stroke-width="0.5"/><rect x="4.6" y="0.8" width="0.8" height="1.8" fill="#a3bcdb"/><rect x="5.4" y="0" width="0.9" height="2.6" fill="#f2dfab"/><rect x="6.3" y="0.5" width="0.8" height="2.1" fill="#b9b9b9"/><path d="M9 0h2.5l0.6 1l-0.6 1h-2.5l0.6-1z" fill="#b6cec7"/><rect x="10" y="1" width="2.2" height="1.6" fill="#fff" stroke="#bbb" stroke-width="0.4"/><path d="M13.5 0.5l1.5-0.7l1.5 0.7v2l-1.5 0.7l-1.5-0.7z" fill="none" stroke="#aaa" stroke-width="0.4"/><circle cx="16.2" cy="2.4" r="0.9" fill="#8daedb"/><rect x="0" y="4.4" width="3.3" height="3" fill="none" stroke="#bbb" stroke-width="0.5"/><rect x="1.6" y="5.5" width="1.8" height="1.3" fill="#fff" stroke="#8ea9d0" stroke-width="0.4"/><rect x="4.5" y="4.4" width="3.3" height="3" fill="none" stroke="#bbb" stroke-width="0.5"/><path d="M4.8 7.2l1-1.3l1.2 1.3z" fill="#8eaad6"/><rect x="9" y="4.6" width="2.6" height="2.6" fill="none" stroke="#bbb" stroke-width="0.5"/><path d="M13.5 4.8c1 1 2 1 3 0c0 2-1.5 3-3 2.5z" fill="#8fb0dc"/></g><rect x="0" y="67.55673222390318" width="130" height="0.9883509833585464" fill="#fdbf00"/><rect x="0" y="68.24508320726173" width="130" height="10" fill="#3b5a60"/><rect x="12.5" y="69.5" width="26" height="4" fill="none" stroke="#f4f4f4" stroke-width="1" stroke-dasharray="1 1"/><rect x="39.5" y="69.5" width="52" height="4" fill="none" stroke="#f4f4f4" stroke-width="1" stroke-dasharray="1 1"/><rect x="105.5" y="69.5" width="14" height="4" fill="none" stroke="#f4f4f4" stroke-width="1" stroke-dasharray="1 1"/></svg>
</div>
<div class="a" style="left:76px;top:290px;width:130px;height:73px;background:#fff;border-radius:5px;box-shadow:0 0.5px 1.5px rgba(0,0,0,0.35)"></div>
<div class="a" style="left:76px;top:290px;width:130px;height:73px;border-radius:5px;overflow:hidden">
<svg style="left:0;top:0" width="130" height="73"><rect x="12.5" y="3.5" width="107" height="16" fill="none" stroke="#3a3a3a" stroke-width="1" stroke-dasharray="2 1"/><path d="M12.783661119515886 19.085476550680788H118.88804841149773" stroke="#555" stroke-width="0.8"/><text x="13.3" y="17.6" font-family="Liberation Serif" font-weight="bold" font-size="6.6" fill="#404040" stroke="#404040" stroke-width="0.7" letter-spacing="0.3">Click to edit Master title style</text><rect x="0" y="67.55673222390318" width="130" height="0.9883509833585464" fill="#fdbf00"/><rect x="0" y="68.24508320726173" width="130" height="10" fill="#3b5a60"/><rect x="12.5" y="69.5" width="26" height="4" fill="none" stroke="#f4f4f4" stroke-width="1" stroke-dasharray="1 1"/><rect x="39.5" y="69.5" width="52" height="4" fill="none" stroke="#f4f4f4" stroke-width="1" stroke-dasharray="1 1"/><rect x="105.5" y="69.5" width="14" height="4" fill="none" stroke="#f4f4f4" stroke-width="1" stroke-dasharray="1 1"/></svg>
</div>
<div class="a" style="left:76px;top:389px;width:130px;height:73px;background:#fff;border-radius:5px;box-shadow:0 0.5px 1.5px rgba(0,0,0,0.35)"></div>
<div class="a" style="left:76px;top:389px;width:130px;height:73px;border-radius:5px;overflow:hidden">
<svg style="left:0;top:0" width="130" height="73"><rect x="0" y="67.55673222390318" width="130" height="0.9883509833585464" fill="#fdbf00"/><rect x="0" y="68.24508320726173" width="130" height="10" fill="#3b5a60"/><rect x="12.5" y="69.5" width="26" height="4" fill="none" stroke="#f4f4f4" stroke-width="1" stroke-dasharray="1 1"/><rect x="39.5" y="69.5" width="52" height="4" fill="none" stroke="#f4f4f4" stroke-width="1" stroke-dasharray="1 1"/><rect x="105.5" y="69.5" width="14" height="4" fill="none" stroke="#f4f4f4" stroke-width="1" stroke-dasharray="1 1"/></svg>
</div>
<div class="a" style="left:76px;top:488px;width:130px;height:73px;background:#fff;border-radius:5px;box-shadow:0 0.5px 1.5px rgba(0,0,0,0.35)"></div>
<div class="a" style="left:76px;top:488px;width:130px;height:73px;border-radius:5px;overflow:hidden">
<svg style="left:0;top:0" width="130" height="73"><rect x="12.5" y="69.5" width="26" height="6" fill="none" stroke="#3a3a3a" stroke-width="1" stroke-dasharray="2 1"/><rect x="39.5" y="69.5" width="52" height="6" fill="none" stroke="#3a3a3a" stroke-width="1" stroke-dasharray="2 1"/><rect x="105.5" y="69.5" width="14" height="6" fill="none" stroke="#3a3a3a" stroke-width="1" stroke-dasharray="2 1"/></svg>
</div>
<div class="a" style="left:76px;top:587px;width:130px;height:73px;background:#fff;border-radius:5px;box-shadow:0 0.5px 1.5px rgba(0,0,0,0.35)"></div>
<div class="a" style="left:76px;top:587px;width:130px;height:73px;border-radius:5px;overflow:hidden">
<svg style="left:0;top:0" width="130" height="73"><rect x="0" y="0" width="42.7" height="73" fill="#3b5a60"/><rect x="42.7" y="0" width="0.9" height="73" fill="#fdbf00"/><rect x="5.5" y="6.5" width="36" height="24.3" fill="none" stroke="#f4f4f4" stroke-width="1" stroke-dasharray="1 1"/><rect x="5.5" y="32.5" width="36" height="39" fill="none" stroke="#f4f4f4" stroke-width="1" stroke-dasharray="1 1"/><text font-family="Liberation Serif" font-weight="bold" font-size="6" fill="#fff" stroke="#fff" stroke-width="0.5"><tspan x="7" y="19">Click to edit</tspan><tspan x="7" y="24.3">Master title</tspan><tspan x="7" y="29.5">style</tspan></text><rect x="7" y="35" width="6" height="0.8" fill="#cfd8da"/><rect x="51.5" y="7.5" width="70" height="57" fill="none" stroke="#3a3a3a" stroke-width="1" stroke-dasharray="2 1"/><rect x="53.0" y="10.5" width="24.0" height="0.8" fill="#9a9a9a" opacity="0.7"/><rect x="55.4" y="13.06" width="11.200000000000001" height="0.8" fill="#9a9a9a" opacity="0.7"/><rect x="57.0" y="14.98" width="8.8" height="0.8" fill="#9a9a9a" opacity="0.7"/><rect x="58.6" y="16.9" width="9.600000000000001" height="0.8" fill="#9a9a9a" opacity="0.7"/><rect x="60.2" y="18.82" width="8.0" height="0.8" fill="#9a9a9a" opacity="0.7"/><g transform="translate(60.5,26.5) scale(2.6)"><rect x="0" y="0" width="3.3" height="2.6" fill="none" stroke="#b9b9b9" stroke-width="0.5"/><rect x="4.6" y="0.8" width="0.8" height="1.8" fill="#a3bcdb"/><rect x="5.4" y="0" width="0.9" height="2.6" fill="#f2dfab"/><rect x="6.3" y="0.5" width="0.8" height="2.1" fill="#b9b9b9"/><path d="M9 0h2.5l0.6 1l-0.6 1h-2.5l0.6-1z" fill="#b6cec7"/><rect x="10" y="1" width="2.2" height="1.6" fill="#fff" stroke="#bbb" stroke-width="0.4"/><path d="M13.5 0.5l1.5-0.7l1.5 0.7v2l-1.5 0.7l-1.5-0.7z" fill="none" stroke="#aaa" stroke-width="0.4"/><circle cx="16.2" cy="2.4" r="0.9" fill="#8daedb"/><rect x="0" y="4.4" width="3.3" height="3" fill="none" stroke="#bbb" stroke-width="0.5"/><rect x="1.6" y="5.5" width="1.8" height="1.3" fill="#fff" stroke="#8ea9d0" stroke-width="0.4"/><rect x="4.5" y="4.4" width="3.3" height="3" fill="none" stroke="#bbb" stroke-width="0.5"/><path d="M4.8 7.2l1-1.3l1.2 1.3z" fill="#8eaad6"/><rect x="9" y="4.6" width="2.6" height="2.6" fill="none" stroke="#bbb" stroke-width="0.5"/><path d="M13.5 4.8c1 1 2 1 3 0c0 2-1.5 3-3 2.5z" fill="#8fb0dc"/></g><rect x="51.5" y="67.5" width="50" height="8" fill="none" stroke="#3a3a3a" stroke-width="1" stroke-dasharray="2 1"/><rect x="103.5" y="67.5" width="17" height="8" fill="none" stroke="#3a3a3a" stroke-width="1" stroke-dasharray="2 1"/><circle cx="125" cy="67" r="2.5" fill="#cfcfcf"/><rect x="5.5" y="69" width="28" height="6" fill="none" stroke="#f4f4f4" stroke-width="1" stroke-dasharray="1 1"/></svg>
</div>
<div class="a" style="left:76px;top:686px;width:130px;height:73px;background:#fff;border-radius:5px;box-shadow:0 0.5px 1.5px rgba(0,0,0,0.35)"></div>
<div class="a" style="left:76px;top:686px;width:130px;height:73px;border-radius:5px;overflow:hidden">
<svg style="left:0;top:0" width="130" height="73"><rect x="87" y="0" width="43" height="73" fill="#3b5a60"/><rect x="86.2" y="0" width="0.9" height="73" fill="#fdbf00"/><rect x="91.5" y="6.5" width="36" height="24.5" fill="none" stroke="#f4f4f4" stroke-width="1" stroke-dasharray="1 1"/><rect x="91.5" y="32.5" width="36" height="38" fill="none" stroke="#f4f4f4" stroke-width="1" stroke-dasharray="1 1"/><text font-family="Liberation Serif" font-weight="bold" font-size="6" fill="#fff" stroke="#fff" stroke-width="0.5"><tspan x="93" y="17.5">Click to edit</tspan><tspan x="93" y="22.8">Master title</tspan><tspan x="93" y="28">style</tspan></text><rect x="6.5" y="7.5" width="70" height="57" fill="none" stroke="#3a3a3a" stroke-width="1" stroke-dasharray="2 1"/><rect x="8.0" y="10.0" width="24.0" height="0.8" fill="#9a9a9a" opacity="0.7"/><rect x="10.4" y="12.56" width="11.200000000000001" height="0.8" fill="#9a9a9a" opacity="0.7"/><rect x="12.0" y="14.48" width="8.8" height="0.8" fill="#9a9a9a" opacity="0.7"/><rect x="13.600000000000001" y="16.4" width="9.600000000000001" height="0.8" fill="#9a9a9a" opacity="0.7"/><rect x="15.2" y="18.32" width="8.0" height="0.8" fill="#9a9a9a" opacity="0.7"/><g transform="translate(15,26.5) scale(2.6)"><rect x="0" y="0" width="3.3" height="2.6" fill="none" stroke="#b9b9b9" stroke-width="0.5"/><rect x="4.6" y="0.8" width="0.8" height="1.8" fill="#a3bcdb"/><rect x="5.4" y="0" width="0.9" height="2.6" fill="#f2dfab"/><rect x="6.3" y="0.5" width="0.8" height="2.1" fill="#b9b9b9"/><path d="M9 0h2.5l0.6 1l-0.6 1h-2.5l0.6-1z" fill="#b6cec7"/><rect x="10" y="1" width="2.2" height="1.6" fill="#fff" stroke="#bbb" stroke-width="0.4"/><path d="M13.5 0.5l1.5-0.7l1.5 0.7v2l-1.5 0.7l-1.5-0.7z" fill="none" stroke="#aaa" stroke-width="0.4"/><circle cx="16.2" cy="2.4" r="0.9" fill="#8daedb"/><rect x="0" y="4.4" width="3.3" height="3" fill="none" stroke="#bbb" stroke-width="0.5"/><rect x="1.6" y="5.5" width="1.8" height="1.3" fill="#fff" stroke="#8ea9d0" stroke-width="0.4"/><rect x="4.5" y="4.4" width="3.3" height="3" fill="none" stroke="#bbb" stroke-width="0.5"/><path d="M4.8 7.2l1-1.3l1.2 1.3z" fill="#8eaad6"/><rect x="9" y="4.6" width="2.6" height="2.6" fill="none" stroke="#bbb" stroke-width="0.5"/><path d="M13.5 4.8c1 1 2 1 3 0c0 2-1.5 3-3 2.5z" fill="#8fb0dc"/></g><rect x="6.5" y="67.5" width="50" height="7" fill="none" stroke="#3a3a3a" stroke-width="1" stroke-dasharray="2 1"/><rect x="60.5" y="67.5" width="17" height="7" fill="none" stroke="#3a3a3a" stroke-width="1" stroke-dasharray="2 1"/></svg>
</div>
<div class="a" style="left:76px;top:785px;width:130px;height:73px;background:#fff;border-radius:5px;box-shadow:0 0.5px 1.5px rgba(0,0,0,0.35)"></div>
<div class="a" style="left:76px;top:785px;width:130px;height:73px;border-radius:5px;overflow:hidden">
<svg style="left:0;top:0" width="130" height="73"><rect x="0" y="52.2" width="130" height="1" fill="#fdbf00"/><rect x="0" y="53" width="130" height="21" fill="#3b5a60"/><text x="5" y="9.3" font-family="Liberation Sans" font-size="3.8" fill="#9a9a9a">Click icon to add picture</text><rect x="60" y="30" width="10" height="8" fill="none" stroke="#c9d3e3" stroke-width="0.7"/><rect x="65" y="34" width="5" height="3.5" fill="none" stroke="#a9bad6" stroke-width="0.6"/><rect x="12.5" y="53.5" width="108" height="11" fill="none" stroke="#f4f4f4" stroke-width="1" stroke-dasharray="1 1.2"/><text x="13.5" y="61" font-family="Liberation Serif" font-weight="bold" font-size="6.6" fill="#fff" stroke="#fff" stroke-width="0.55" letter-spacing="0.2">Click to edit Master title style</text><rect x="12.5" y="69.5" width="26" height="6" fill="none" stroke="#f4f4f4" stroke-width="1" stroke-dasharray="1 1"/><rect x="39.5" y="69.5" width="52" height="6" fill="none" stroke="#f4f4f4" stroke-width="1" stroke-dasharray="1 1"/><rect x="105.5" y="69.5" width="14" height="6" fill="none" stroke="#f4f4f4" stroke-width="1" stroke-dasharray="1 1"/></svg>
</div>
<div class="a" style="left:76px;top:884px;width:130px;height:73px;background:#fff;border-radius:5px;box-shadow:0 0.5px 1.5px rgba(0,0,0,0.35)"></div>
<div class="a" style="left:76px;top:884px;width:130px;height:73px;border-radius:5px;overflow:hidden">
<svg style="left:0;top:0" width="130" height="73"><rect x="12.5" y="3.5" width="108" height="16.5" fill="none" stroke="#3a3a3a" stroke-width="1" stroke-dasharray="2 1"/><path d="M13 19.5H120.5" stroke="#555" stroke-width="1"/><rect x="12.5" y="20.5" width="108" height="60" fill="none" stroke="#3a3a3a" stroke-width="1" stroke-dasharray="2 1"/><text x="13.3" y="16.5" font-family="Liberation Serif" font-weight="bold" font-size="6.6" fill="#404040" stroke="#404040" stroke-width="0.7" letter-spacing="0.3">Click to edit Master title style</text><rect x="114" y="22" width="1" height="48" fill="#888" opacity="0.6"/><rect x="111" y="23" width="0.8" height="15" fill="#888" opacity="0.6"/><rect x="108" y="24" width="0.8" height="12" fill="#888" opacity="0.6"/><rect x="105" y="25" width="0.8" height="10" fill="#888" opacity="0.6"/></svg>
</div>
<div class="a" style="left:0px;top:937px;width:1920px;height:26px;background:#f3f3f3"></div>
<div class="a" style="left:9.20px;top:945.40px;font-family:'Liberation Sans',sans-serif;font-size:13px;line-height:13px;color:#333;font-weight:normal;font-style:normal;letter-spacing:-0.1px;letter-spacing:0.118px">Slide Master</div>
<div class="a" style="left:145.50px;top:945.40px;font-family:'Liberation Sans',sans-serif;font-size:13px;line-height:13px;color:#333;font-weight:normal;font-style:normal;letter-spacing:-0.1px;letter-spacing:-0.100px">English (United States)</div>
<div class="a" style="left:318.50px;top:945.40px;font-family:'Liberation Sans',sans-serif;font-size:13px;line-height:13px;color:#333;font-weight:normal;font-style:normal;letter-spacing:-0.15px;letter-spacing:-0.118px">Accessibility: Investigate</div>
<div class="a" style="left:1850.48px;top:945.40px;font-family:'Liberation Sans',sans-serif;font-size:13px;line-height:13px;color:#333;font-weight:normal;font-style:normal;letter-spacing:0.3px;letter-spacing:-0.393px">83 %</div>
<svg style="left:106px;top:942px" width="21" height="19" viewBox="0 0 21 19"><path d="M2 1.5H8.5L10 3V16.5L8.5 15H2z M10 3L11.5 1.5H17V9" fill="none" stroke="#3a3a3a" stroke-width="1.2"/><path d="M12 11.5L18 17.5M18 11.5L12 17.5" stroke="#3a3a3a" stroke-width="1.2"/></svg>
<svg style="left:296px;top:941px" width="21" height="20" viewBox="0 0 21 20"><circle cx="9" cy="2.8" r="1.9" fill="none" stroke="#3a3a3a" stroke-width="1.1"/><path d="M1.5 5.5C4.5 7 13.5 7 16.5 5.5M9 7.5V11M6.5 17.5L9 11L10.5 14" fill="none" stroke="#3a3a3a" stroke-width="1.1"/><path d="M12.5 12.5L18.5 18.5M18.5 12.5L12.5 18.5" stroke="#3a3a3a" stroke-width="1.1"/></svg>
<svg style="left:1486px;top:942px" width="21" height="18" viewBox="0 0 21 18"><rect x="1.2" y="1.5" width="17.8" height="14.8" fill="none" stroke="#444" stroke-width="1.2"/><path d="M4.3 1.5V16.3M4.3 12.8H19" stroke="#444" stroke-width="1.2"/><rect x="7.5" y="4.5" width="8.5" height="5.2" fill="none" stroke="#444" stroke-width="1.1"/></svg>
<svg style="left:1536px;top:942px" width="20" height="18" viewBox="0 0 20 18"><g fill="none" stroke="#444" stroke-width="1.2"><rect x="1.5" y="2" width="6.5" height="5"/><rect x="11" y="2" width="6.5" height="5"/><rect x="1.5" y="10.5" width="6.5" height="5"/><rect x="11" y="10.5" width="6.5" height="5"/></g></svg>
<svg style="left:1586px;top:942px" width="19" height="18" viewBox="0 0 19 18"><path d="M1.2 2.5C4 1.5 7 1.5 9 3V16C7 14.5 4 14.5 1.2 15.5z M16.8 2.5C14 1.5 11 1.5 9 3V16C11 14.5 14 14.5 16.8 15.5z" fill="none" stroke="#444" stroke-width="1.1"/><path d="M3 6H7M3 9H7M3 12H7M11 6H15M11 9H15M11 12H15" stroke="#555" stroke-width="0.9"/></svg>
<svg style="left:1636px;top:941px" width="19" height="19" viewBox="0 0 19 19"><path d="M1 1.5H17.5" stroke="#444" stroke-width="1.3"/><rect x="3" y="2.5" width="12.5" height="8" fill="none" stroke="#444" stroke-width="1.2"/><path d="M6.5 5.5H12M9.2 10.5V16.8M5 17.2H13.5" stroke="#444" stroke-width="1.2"/></svg>
<div class="a" style="left:1678px;top:950px;width:10px;height:1.3px;background:#555"></div>
<div class="a" style="left:1694px;top:951px;width:125px;height:1px;background:#8a8a8a"></div>
<div class="a" style="left:1743px;top:944px;width:6px;height:14px;background:#666;border-radius:1px"></div>
<div class="a" style="left:1756px;top:946px;width:1px;height:10px;background:#888"></div>
<div class="a" style="left:1825px;top:950px;width:10px;height:1.3px;background:#555"></div>
<div class="a" style="left:1829.4px;top:945.5px;width:1.3px;height:10px;background:#555"></div>
<svg style="left:1894px;top:940px" width="21" height="21" viewBox="0 0 21 21"><rect x="6.3" y="6.3" width="8.4" height="8.4" fill="none" stroke="#444" stroke-width="1.2"/><path d="M10.5 1.5L7.8 4.2M10.5 1.5L13.2 4.2M10.5 19.5L7.8 16.8M10.5 19.5L13.2 16.8M1.5 10.5L4.2 7.8M1.5 10.5L4.2 13.2M19.5 10.5L16.8 7.8M19.5 10.5L16.8 13.2" fill="none" stroke="#444" stroke-width="1.2"/></svg>
</body></html>
